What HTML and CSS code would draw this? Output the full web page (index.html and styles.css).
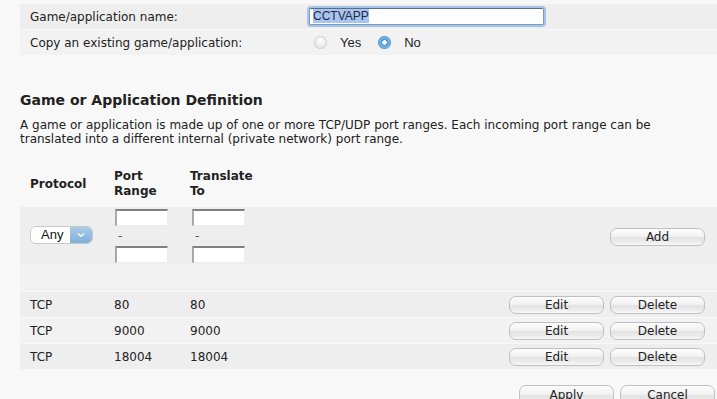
FILE: index.html
```html
<!DOCTYPE html>
<html>
<head>
<meta charset="utf-8">
<link rel="stylesheet" href="styles.css">
</head>
<body>
<div class="page">
  <div class="form">
    <div class="frow odd">
      <div class="flabel">Game/application name:</div>
      <div class="fval"><span class="textbox focus"><span class="sel">CCTVAPP</span></span></div>
    </div>
    <div class="frow even">
      <div class="flabel">Copy an existing game/application:</div>
      <div class="fval">
        <span class="radio"></span><span class="rlabel">Yes</span>
        <span class="radio on"></span><span class="rlabel">No</span>
      </div>
    </div>
  </div>

  <h2 class="heading">Game or Application Definition</h2>
  <p class="desc">A game or application is made up of one or more TCP/UDP port ranges. Each incoming port range can be translated into a different internal (private network) port range.</p>

  <div class="table">
    <div class="trow head">
      <div class="c1">Protocol</div>
      <div class="c2">Port<br>Range</div>
      <div class="c3">Translate<br>To</div>
    </div>
    <div class="trow addrow">
      <div class="c1">
        <span class="select"><span class="selval">Any</span><span class="selbtn"><svg width="10" height="6" viewBox="0 0 10 6"><path d="M2 1.5 L5 4.2 L8 1.5" fill="none" stroke="#fff" stroke-width="1.4"/></svg></span></span>
      </div>
      <div class="c2 stack"><span class="port"></span><span class="dash">-</span><span class="port"></span></div>
      <div class="c3 stack"><span class="port"></span><span class="dash">-</span><span class="port"></span></div>
      <div class="acts"><button class="btn">Add</button></div>
    </div>
    <div class="trow empty"></div>
    <div class="trow data odd">
      <div class="c1">TCP</div><div class="c2">80</div><div class="c3">80</div>
      <div class="acts"><button class="btn">Edit</button><button class="btn">Delete</button></div>
    </div>
    <div class="trow data even">
      <div class="c1">TCP</div><div class="c2">9000</div><div class="c3">9000</div>
      <div class="acts"><button class="btn">Edit</button><button class="btn">Delete</button></div>
    </div>
    <div class="trow data odd">
      <div class="c1">TCP</div><div class="c2">18004</div><div class="c3">18004</div>
      <div class="acts"><button class="btn">Edit</button><button class="btn">Delete</button></div>
    </div>
  </div>

  <div class="footer">
    <button class="btn">Apply</button><button class="btn">Cancel</button>
  </div>
</div>
</body>
</html>
```

FILE: styles.css
```css
html, body {
  margin: 0;
  padding: 0;
  background: #f8f8f8;
  overflow: hidden;
}
body {
  font-family: "DejaVu Sans", Verdana, sans-serif;
  font-size: 12px;
  color: #222;
}
.page {
  padding: 4px 0 0 20px;
  width: 697px;
}
.form {
  display: flex;
  flex-direction: column;
}
.frow {
  display: flex;
  align-items: center;
  height: 25px;
}
.frow.odd { background: #eeeeee; border-bottom: 1px solid #f7f7f7; }
.frow.even { background: #f2f2f2; }
.flabel {
  width: 279px;
  padding-left: 10px;
}
.fval {
  display: flex;
  align-items: center;
}
.textbox {
  display: block;
  box-sizing: border-box;
  width: 235px;
  height: 17px;
  background: #fff;
  border: 1px solid #7a9cc4;
  box-shadow: 0 0 0 2px #a6c4e6;
  border-top-color: #5c6e88;
  border-radius: 2px;
  padding: 1px 0 0 3px;
  font-family: "Liberation Sans", Arial, sans-serif;
  font-size: 12px;
  line-height: 13px;
  color: #1d2a44;
}
.textbox .sel { background: #a9c5ef; }
.radio {
  display: inline-block;
  width: 13px;
  height: 13px;
  border-radius: 50%;
  background: radial-gradient(circle at 50% 35%, #ffffff 0%, #eaeaea 55%, #cfcfcf 100%);
  box-shadow: inset 0 0 0 1px #d0d0d0;
  margin-left: 5px;
}
.radio.on {
  background: radial-gradient(circle, #ffffff 0 2px, #3f8ed0 2.5px, #69abe0 4px, #9ac8ee 100%);
  box-shadow: inset 0 0 0 1px #6aa0d0;
  margin-left: 17px;
}
.rlabel { margin-left: 13px; font-family: "Liberation Sans", Arial, sans-serif; font-size: 13px; }

.heading {
  font-size: 14px;
  font-weight: bold;
  margin: 37px 0 0 0;
  height: 17px;
  line-height: 17px;
  color: #222;
}
.desc {
  margin: 9px 0 0 0;
  line-height: 14px;
  width: 660px;
}

.table {
  margin-top: 23px;
  display: flex;
  flex-direction: column;
}
.trow {
  display: flex;
  align-items: center;
  padding-left: 10px;
}
.c1 { width: 84px; }
.c2 { width: 76px; }
.c3 { width: 76px; }
.head {
  font-weight: bold;
  line-height: 15px;
  height: 38px;
  align-items: flex-start;
  padding-top: 0;
}
.head .c1 { padding-top: 8px; }
.addrow {
  background: #eeeeee;
  height: 57px;
}
.stack {
  display: flex;
  flex-direction: column;
  align-items: flex-start;
  padding-top: 1px;
}
.c2.stack { padding-left: 1px; width: 75px; }
.c3.stack { padding-left: 2px; width: 74px; }
.port {
  display: block;
  box-sizing: border-box;
  width: 53px;
  height: 17px;
  background: #fff;
  border-top: 2px solid #808080;
  border-left: 2px solid #a9a9a9;
  border-right: 1px solid #ececec;
  border-bottom: 1px solid #ececec;
}
.dash { height: 20px; line-height: 20px; padding-left: 3px; color: #555; }
.select {
  display: inline-flex;
  box-sizing: border-box;
  width: 63px;
  height: 18px;
  border-radius: 6px;
  border: 1px solid #c8c8c8;
  overflow: hidden;
  margin-top: -2px;
}
.selval {
  flex: 1;
  background: #fff;
  font-family: "Liberation Sans", Arial, sans-serif;
  font-size: 13px;
  line-height: 16px;
  padding-left: 10px;
  color: #111;
}
.selbtn {
  width: 22px;
  background: linear-gradient(#a7cbe8, #7fb0da);
  display: flex;
  align-items: center;
  justify-content: center;
}
.acts {
  margin-left: auto;
  display: flex;
  gap: 6px;
  padding-right: 12px;
}
.btn {
  box-sizing: border-box;
  width: 95px;
  height: 18px;
  padding: 0;
  border: 1px solid #c0c0c0;
  border-radius: 7px;
  background: linear-gradient(#fdfdfd 0%, #f2f2f2 45%, #e2e2e2 55%, #ececec 80%, #f8f8f8 100%);
  font-family: "DejaVu Sans", Verdana, sans-serif;
  font-size: 12px;
  color: #222;
  line-height: 16px;
}
.addrow .acts { margin-top: 3px; }
.empty {
  background: #f2f2f2;
  height: 27px;
}
.data {
  height: 25px;
  border-top: 1px solid #f8f8f8;
}
.data.odd { background: #eeeeee; }
.data.even { background: #f2f2f2; }
.footer {
  display: flex;
  justify-content: flex-end;
  gap: 6px;
  margin-top: 16px;
  padding-right: 2px;
}
.footer .btn { height: 20px; }
```
